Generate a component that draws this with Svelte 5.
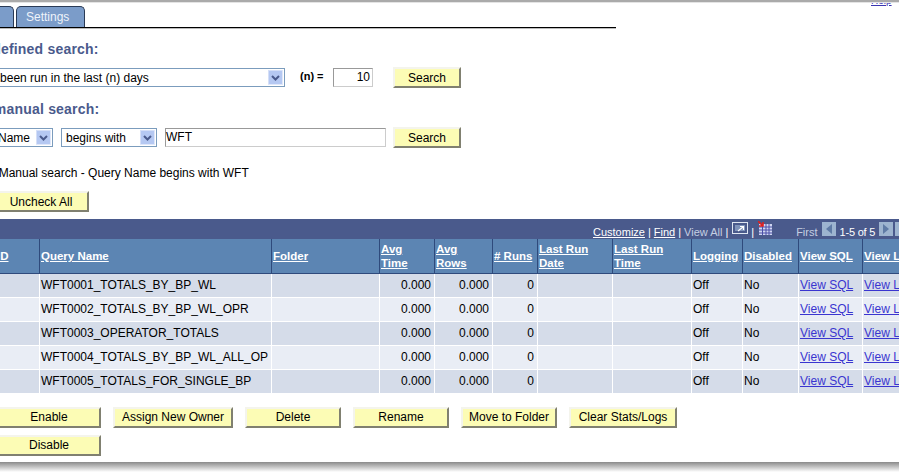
<script>
  const columns = [
    { label: 'ID', width: 99 },
    { label: 'Query Name', width: 232 },
    { label: 'Folder', width: 108 },
    { label: 'Avg Time', width: 55 },
    { label: 'Avg Rows', width: 58 },
    { label: '# Runs', width: 45 },
    { label: 'Last Run Date', width: 75 },
    { label: 'Last Run Time', width: 79 },
    { label: 'Logging', width: 51 },
    { label: 'Disabled', width: 56 },
    { label: 'View SQL', width: 64 },
    { label: 'View Log', width: 78 }
  ];

  const queries = [
    'WFT0001_TOTALS_BY_BP_WL',
    'WFT0002_TOTALS_BY_BP_WL_OPR',
    'WFT0003_OPERATOR_TOTALS',
    'WFT0004_TOTALS_BY_BP_WL_ALL_OP',
    'WFT0005_TOTALS_FOR_SINGLE_BP'
  ];

  const actions = [
    { label: 'Assign New Owner', width: 120 },
    { label: 'Delete', width: 96 },
    { label: 'Rename', width: 96 },
    { label: 'Move to Folder', width: 96 },
    { label: 'Clear Stats/Logs', width: 108 }
  ];
</script>

<div class="page">
  <div class="top-rule"></div>
  <div class="help-row"><a href="#help">Help</a></div>

  <div class="tabs">
    <div class="tab first"></div>
    <div class="tab">Settings</div>
  </div>

  <h2 class="predefined">Predefined search:</h2>
  <div class="row">
    <div class="select wide">
      <span>Queries that have been run in the last (n) days</span>
      <i class="arrow"><svg width="9" height="6" viewBox="0 0 9 6"><path d="M1 1l3.5 3.5L8 1" fill="none" stroke="#4a5a8c" stroke-width="2" /></svg></i>
    </div>
    <b class="n-label">(n) =</b>
    <div class="input n-input">10</div>
    <button class="btn search">Search</button>
  </div>

  <h2 class="manual">Or manual search:</h2>
  <div class="row">
    <div class="select field">
      <span>Query Name</span>
      <i class="arrow"><svg width="9" height="6" viewBox="0 0 9 6"><path d="M1 1l3.5 3.5L8 1" fill="none" stroke="#4a5a8c" stroke-width="2" /></svg></i>
    </div>
    <div class="select operator">
      <span>begins with</span>
      <i class="arrow"><svg width="9" height="6" viewBox="0 0 9 6"><path d="M1 1l3.5 3.5L8 1" fill="none" stroke="#4a5a8c" stroke-width="2" /></svg></i>
    </div>
    <div class="input value">WFT</div>
    <button class="btn search close">Search</button>
  </div>

  <p class="summary">Results: Manual search - Query Name begins with WFT</p>

  <button class="btn uncheck">Uncheck All</button>

  <div class="grid">
    <div class="grid-bar">
      <a href="#customize">Customize</a><span class="sep">|</span><a href="#find">Find</a><span class="sep">|</span><span class="dim">View All</span><span class="sep">|</span>
      <svg class="zoom-icon" width="16" height="13" viewBox="0 0 16 13">
        <rect x="0.5" y="0.5" width="15" height="11" fill="#4a5a8c" stroke="#dfe6f2" />
        <rect x="3" y="3" width="10" height="6" fill="#7f93ba" />
        <path d="M6 9l5-4M8 4.5h3.5V8" fill="none" stroke="#fff" stroke-width="1.2" />
      </svg>
      <span class="sep">|</span>
      <svg class="grid-icon" width="14" height="15" viewBox="0 0 14 15">
        <rect x="1" y="3" width="13" height="11" fill="#cfd6f0" />
        <path d="M1 6h13M1 9h13M1 12h13M4.5 3v11M8 3v11M11 3v11" stroke="#4a4fa8" />
        <path d="M0 0l5 5M5 1v4H1" fill="none" stroke="#e02020" stroke-width="1.6" />
      </svg>
      <span class="dim first-label">First</span>
      <span class="pager-btn"><svg width="8" height="10" viewBox="0 0 8 10"><path d="M7 0v10L1 5z" fill="#5f7ba5" /></svg></span>
      <span class="count">1-5 of 5</span>
      <span class="pager-btn"><svg width="8" height="10" viewBox="0 0 8 10"><path d="M1 0v10l6-5z" fill="#5f7ba5" /></svg></span>
      <span class="pager-btn last"></span>
    </div>

    <table>
      <colgroup>
        {#each columns as col}
          <col style="width: {col.width}px" />
        {/each}
      </colgroup>
      <thead>
        <tr>
          {#each columns as col}
            <th><a href="#sort">{col.label}</a></th>
          {/each}
        </tr>
      </thead>
      <tbody>
        {#each queries as query, i}
          <tr class:alt={i % 2 === 1}>
            <td></td>
            <td>{query}</td>
            <td></td>
            <td class="num">0.000</td>
            <td class="num">0.000</td>
            <td class="num">0</td>
            <td></td>
            <td></td>
            <td>Off</td>
            <td>No</td>
            <td><a href="#sql">View SQL</a></td>
            <td><a href="#log">View Log</a></td>
          </tr>
        {/each}
      </tbody>
    </table>
  </div>

  <div class="actions">
    <button class="btn enable">Enable</button>
    {#each actions as action}
      <button class="btn" style="width: {action.width}px">{action.label}</button>
    {/each}
  </div>
  <div class="actions second">
    <button class="btn enable">Disable</button>
  </div>
</div>
<div class="bottom-shadow"></div>

<style>
  :global(body) {
    margin: 0;
    height: 472px;
    overflow: hidden;
    background: #fff;
  }

  .page {
    width: 1020px;
    height: 462px;
    margin-left: -60px;
    overflow: hidden;
    font-family: "Liberation Sans", Arial, sans-serif;
    font-size: 12px;
    color: #000;
  }

  .top-rule {
    height: 2px;
    background: #aaa;
    border-bottom: 1px solid #e4e4e4;
  }

  .help-row {
    height: 3px;
    overflow: hidden;
    padding-left: 931px;
    font-size: 10px;
  }

  .help-row a {
    color: #3a35b0;
    display: block;
    margin-top: -6px;
    line-height: 8px;
  }

  .tabs {
    display: flex;
    gap: 2px;
    width: 676px;
    height: 21px;
    border-bottom: 1px solid #000;
    box-shadow: 0 1px 0 #bbb;
  }

  .tab {
    width: 69px;
    height: 21px;
    padding-left: 9px;
    box-sizing: border-box;
    background: #7b9cc9;
    border: 1px solid #2a3a55;
    border-width: 1px 1px 0 1px;
    border-radius: 5px 5px 0 0;
    color: #eef3fa;
    line-height: 21px;
  }

  .tab.first {
    flex: none;
    width: 14px;
    margin-left: 60px;
    padding: 0;
    border-left: 0;
    border-radius: 0 5px 0 0;
  }

  h2 {
    margin: 0;
    font-size: 14px;
    font-weight: bold;
    color: #4a5a8c;
    letter-spacing: 0.2px;
    line-height: 16px;
  }

  .predefined {
    margin-top: 13px;
    margin-left: 29px;
  }

  .manual {
    margin-top: 13px;
    margin-left: 33px;
  }

  .row {
    display: flex;
    align-items: center;
    height: 21px;
    margin-top: 10px;
  }

  .select {
    box-sizing: border-box;
    height: 19px;
    display: flex;
    align-items: center;
    justify-content: space-between;
    background: #fff;
    border: 1px solid #7b9cbd;
    padding: 0 1px 0 4px;
    white-space: nowrap;
    overflow: hidden;
  }

  .select.wide {
    width: 345px;
  }

  .select.wide span {
    margin-left: -43px;
  }

  .select.field {
    width: 113px;
    justify-content: flex-end;
    gap: 6px;
  }

  .select.operator {
    width: 96px;
    margin-left: 8px;
  }

  .arrow {
    flex: none;
    display: flex;
    align-items: center;
    justify-content: center;
    width: 15px;
    height: 15px;
    background: #b5c8f2;
    box-shadow: inset -1px -1px 0 #dfe7fa, inset 1px 1px 0 #d5dff7;
  }

  .select.wide .arrow {
    margin-left: auto;
  }

  .n-label {
    margin: -3px 0 0 15px;
    width: 33px;
    font-size: 11px;
  }

  .input {
    box-sizing: border-box;
    height: 19px;
    line-height: 17px;
    background: #fff;
    border: 1px solid;
    border-color: #999 #ccc #ccc #999;
    padding: 0;
  }

  .n-input {
    width: 40px;
    text-align: right;
    padding-right: 2px;
  }

  .value {
    width: 221px;
    margin-left: 8px;
  }

  .btn {
    box-sizing: border-box;
    height: 21px;
    padding: 0;
    font-family: "Liberation Sans", Arial, sans-serif;
    font-size: 12px;
    color: #000;
    background: #fcfcb5;
    border: 2px solid;
    border-color: #f4f4ec #808070 #808070 #f4f4ec;
  }

  .search {
    width: 68px;
    margin-left: 20px;
  }

  .search.close {
    margin-left: 7px;
  }

  .summary {
    margin: 18px 0 0 12px;
    line-height: 14px;
    white-space: nowrap;
  }

  .uncheck {
    display: block;
    width: 96px;
    margin: 11px 0 0 53px;
  }

  .grid {
    margin-top: 7px;
  }

  .grid-bar {
    box-sizing: border-box;
    height: 20px;
    display: flex;
    align-items: center;
    padding: 5px 0 0 653px;
    background: #4a5a8c;
    color: #fff;
    font-size: 11px;
    white-space: nowrap;
  }

  .grid-bar a {
    color: #fff;
  }

  .sep {
    margin: 0 3px;
  }

  .dim {
    color: #c5cfe2;
  }

  .zoom-icon {
    margin: -7px 0 0 1px;
  }

  .grid-icon {
    margin: -7px 0 0 1px;
  }

  .first-label {
    margin-left: 24px;
  }

  .pager-btn {
    flex: none;
    display: flex;
    align-items: center;
    justify-content: center;
    width: 14px;
    height: 14px;
    margin: -6px 0 0 4px;
    background: #9db4cf;
  }

  .pager-btn.last {
    margin-left: 2px;
  }

  .count {
    margin-left: 4px;
    letter-spacing: -0.2px;
  }

  table {
    table-layout: fixed;
    width: 1000px;
    border-collapse: collapse;
    border-bottom: 1px solid #4a5a8c;
  }

  th {
    height: 34px;
    box-sizing: border-box;
    padding: 0 3px 0 1px;
    text-align: left;
    background: #5c85b3;
    border-left: 1px solid #c9d6e6;
    border-right: 1px solid #2f4a7c;
    border-bottom: 1px solid #2f4a7c;
    font-size: 11.5px;
    line-height: 14px;
  }

  th:first-child {
    padding-left: 56px;
  }

  th a {
    color: #fff;
    font-weight: bold;
  }

  td {
    height: 24px;
    box-sizing: border-box;
    padding: 0 3px 0 1px;
    background: #d5dce9;
    border-left: 1px solid #fff;
    border-bottom: 1px solid #fff;
    white-space: nowrap;
    overflow: hidden;
  }

  tr.alt td {
    background: #e9edf5;
  }

  td.num {
    text-align: right;
  }

  td a {
    color: #3a35d0;
  }

  .actions {
    display: flex;
    gap: 12px;
    margin-top: 13px;
    padding-left: 57px;
  }

  .actions.second {
    margin-top: 7px;
  }

  .enable {
    width: 104px;
  }

  .bottom-shadow {
    height: 10px;
    background: linear-gradient(#8a8a8a, #fff);
  }
</style>
